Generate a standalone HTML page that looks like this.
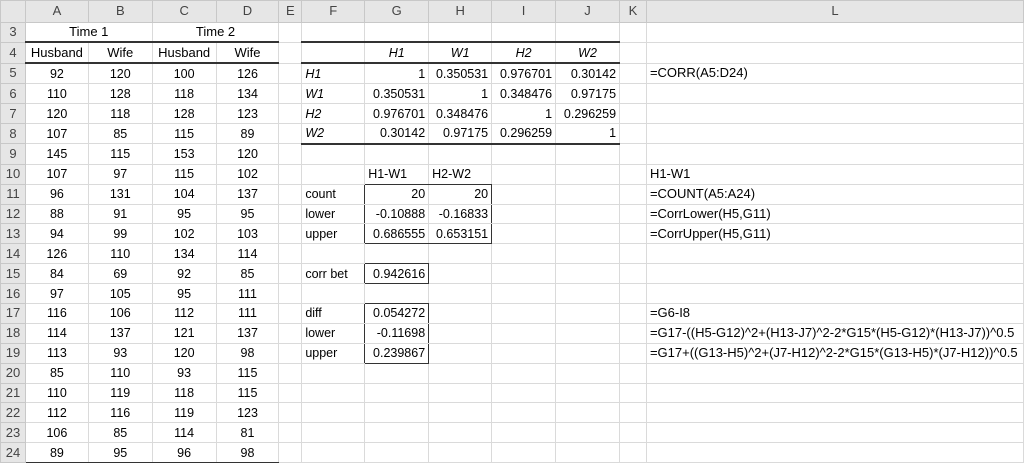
<!DOCTYPE html>
<html><head><meta charset="utf-8"><style>
body{margin:0;width:1024px;height:460px;overflow:hidden;background:#fff;font-family:"Liberation Sans",sans-serif;font-size:12.5px;color:#000}
table{border-collapse:collapse;table-layout:fixed;position:absolute;left:0;top:0}
td{height:18.9px;padding:0 3px;border:1px solid #dadada;white-space:nowrap;overflow:visible;text-align:left;line-height:18px}
tr.h td{height:20.5px;background:#e6e6e6;color:#444;text-align:center;border-color:#c8c8c8;font-size:13px}
td.r{background:#e6e6e6;color:#444;text-align:center;border-color:#c8c8c8;padding:0;font-size:13px}
.c{text-align:center}.n{text-align:right}.i{font-style:italic}
.bb{border-bottom:2px solid #333}.b1{border-bottom:1px solid #333}
.k{border-bottom:1px solid #333}.kr{border-right:1px solid #333}
.f{font-size:13px}
</style></head><body>
<table>
<colgroup><col style="width:25px"><col style="width:63px"><col style="width:64px"><col style="width:64px"><col style="width:63px"><col style="width:23px"><col style="width:63px"><col style="width:64px"><col style="width:63px"><col style="width:64px"><col style="width:64px"><col style="width:27px"><col style="width:377px"></colgroup>
<tr class="h"><td></td><td>A</td><td>B</td><td>C</td><td>D</td><td>E</td><td>F</td><td>G</td><td>H</td><td>I</td><td>J</td><td>K</td><td>L</td></tr>
<tr><td class="r">3</td><td colspan="2" class="c bb f">Time 1</td><td colspan="2" class="c bb f">Time 2</td><td></td><td class="bb"></td><td class="bb"></td><td class="bb"></td><td class="bb"></td><td class="bb"></td><td></td><td></td></tr>
<tr><td class="r">4</td><td class="c bb f">Husband</td><td class="c bb f">Wife</td><td class="c bb f">Husband</td><td class="c bb f">Wife</td><td></td><td class="bb"></td><td class="c i bb">H1</td><td class="c i bb">W1</td><td class="c i bb">H2</td><td class="c i bb">W2</td><td></td><td></td></tr>
<tr><td class="r">5</td><td class="c">92</td><td class="c">120</td><td class="c">100</td><td class="c">126</td><td></td><td class="i">H1</td><td class="n">1</td><td class="n">0.350531</td><td class="n">0.976701</td><td class="n">0.30142</td><td></td><td class="f">=CORR(A5:D24)</td></tr>
<tr><td class="r">6</td><td class="c">110</td><td class="c">128</td><td class="c">118</td><td class="c">134</td><td></td><td class="i">W1</td><td class="n">0.350531</td><td class="n">1</td><td class="n">0.348476</td><td class="n">0.97175</td><td></td><td></td></tr>
<tr><td class="r">7</td><td class="c">120</td><td class="c">118</td><td class="c">128</td><td class="c">123</td><td></td><td class="i">H2</td><td class="n">0.976701</td><td class="n">0.348476</td><td class="n">1</td><td class="n">0.296259</td><td></td><td></td></tr>
<tr><td class="r">8</td><td class="c">107</td><td class="c">85</td><td class="c">115</td><td class="c">89</td><td></td><td class="i bb">W2</td><td class="n bb">0.30142</td><td class="n bb">0.97175</td><td class="n bb">0.296259</td><td class="n bb">1</td><td></td><td></td></tr>
<tr><td class="r">9</td><td class="c">145</td><td class="c">115</td><td class="c">153</td><td class="c">120</td><td></td><td></td><td></td><td></td><td></td><td></td><td></td><td></td></tr>
<tr><td class="r">10</td><td class="c">107</td><td class="c">97</td><td class="c">115</td><td class="c">102</td><td></td><td></td><td class="k">H1-W1</td><td class="k">H2-W2</td><td></td><td></td><td></td><td class="f">H1-W1</td></tr>
<tr><td class="r">11</td><td class="c">96</td><td class="c">131</td><td class="c">104</td><td class="c">137</td><td></td><td class="kr">count</td><td class="n">20</td><td class="n kr">20</td><td></td><td></td><td></td><td class="f">=COUNT(A5:A24)</td></tr>
<tr><td class="r">12</td><td class="c">88</td><td class="c">91</td><td class="c">95</td><td class="c">95</td><td></td><td class="kr">lower</td><td class="n">-0.10888</td><td class="n kr">-0.16833</td><td></td><td></td><td></td><td class="f">=CorrLower(H5,G11)</td></tr>
<tr><td class="r">13</td><td class="c">94</td><td class="c">99</td><td class="c">102</td><td class="c">103</td><td></td><td class="kr">upper</td><td class="n k">0.686555</td><td class="n k kr">0.653151</td><td></td><td></td><td></td><td class="f">=CorrUpper(H5,G11)</td></tr>
<tr><td class="r">14</td><td class="c">126</td><td class="c">110</td><td class="c">134</td><td class="c">114</td><td></td><td></td><td class="k"></td><td></td><td></td><td></td><td></td><td></td></tr>
<tr><td class="r">15</td><td class="c">84</td><td class="c">69</td><td class="c">92</td><td class="c">85</td><td></td><td class="kr">corr bet</td><td class="n k kr">0.942616</td><td></td><td></td><td></td><td></td><td></td></tr>
<tr><td class="r">16</td><td class="c">97</td><td class="c">105</td><td class="c">95</td><td class="c">111</td><td></td><td></td><td class="k"></td><td></td><td></td><td></td><td></td><td></td></tr>
<tr><td class="r">17</td><td class="c">116</td><td class="c">106</td><td class="c">112</td><td class="c">111</td><td></td><td class="kr">diff</td><td class="n kr">0.054272</td><td></td><td></td><td></td><td></td><td class="f">=G6-I8</td></tr>
<tr><td class="r">18</td><td class="c">114</td><td class="c">137</td><td class="c">121</td><td class="c">137</td><td></td><td class="kr">lower</td><td class="n kr">-0.11698</td><td></td><td></td><td></td><td></td><td class="f">=G17-((H5-G12)^2+(H13-J7)^2-2*G15*(H5-G12)*(H13-J7))^0.5</td></tr>
<tr><td class="r">19</td><td class="c">113</td><td class="c">93</td><td class="c">120</td><td class="c">98</td><td></td><td class="kr">upper</td><td class="n k kr">0.239867</td><td></td><td></td><td></td><td></td><td class="f">=G17+((G13-H5)^2+(J7-H12)^2-2*G15*(G13-H5)*(J7-H12))^0.5</td></tr>
<tr><td class="r">20</td><td class="c">85</td><td class="c">110</td><td class="c">93</td><td class="c">115</td><td></td><td></td><td></td><td></td><td></td><td></td><td></td><td></td></tr>
<tr><td class="r">21</td><td class="c">110</td><td class="c">119</td><td class="c">118</td><td class="c">115</td><td></td><td></td><td></td><td></td><td></td><td></td><td></td><td></td></tr>
<tr><td class="r">22</td><td class="c">112</td><td class="c">116</td><td class="c">119</td><td class="c">123</td><td></td><td></td><td></td><td></td><td></td><td></td><td></td><td></td></tr>
<tr><td class="r">23</td><td class="c">106</td><td class="c">85</td><td class="c">114</td><td class="c">81</td><td></td><td></td><td></td><td></td><td></td><td></td><td></td><td></td></tr>
<tr><td class="r">24</td><td class="c b1">89</td><td class="c b1">95</td><td class="c b1">96</td><td class="c b1">98</td><td></td><td></td><td></td><td></td><td></td><td></td><td></td><td></td></tr>
</table>
</body></html>
